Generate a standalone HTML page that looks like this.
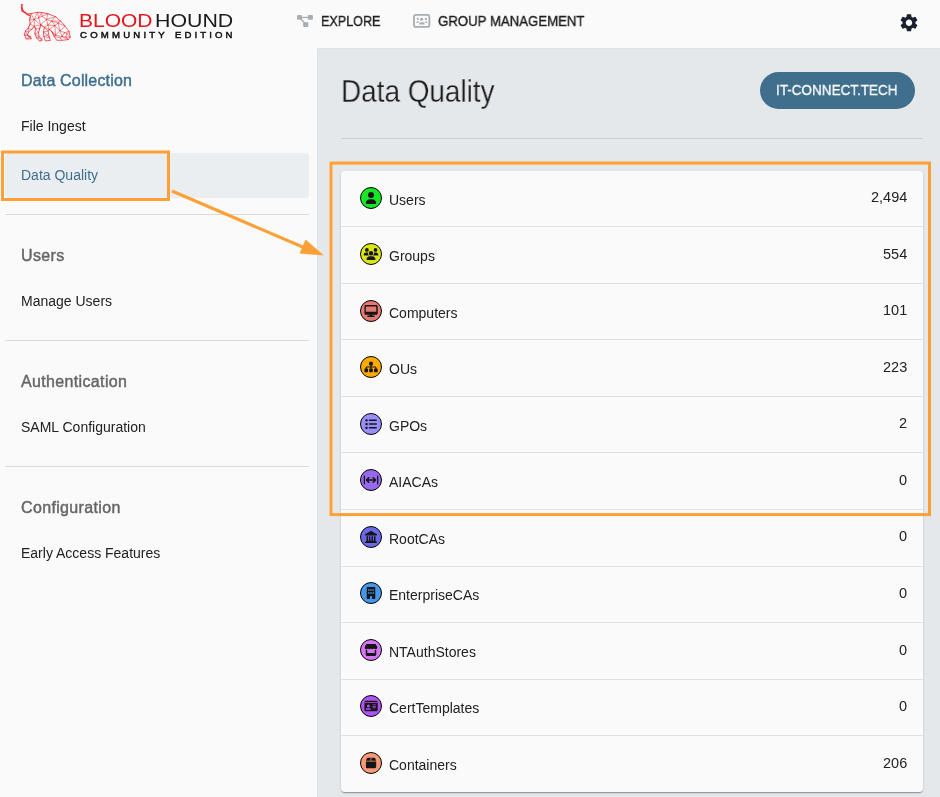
<!DOCTYPE html>
<html><head><meta charset="utf-8">
<style>
*{margin:0;padding:0;box-sizing:border-box}
html,body{width:940px;height:797px;overflow:hidden;background:#fafafa;font-family:"Liberation Sans",sans-serif;color:#212121}
body{position:relative}
.abs{position:absolute}
#header{position:absolute;left:0;top:0;width:940px;height:48px;background:#fafafa}
#side{position:absolute;left:0;top:48px;width:317px;height:749px;background:#fafafa}
#main{position:absolute;left:317px;top:48px;width:623px;height:749px;background:#e4e8eb;box-shadow:inset 1px 1px 0 rgba(0,0,0,0.018)}
.t{position:absolute;white-space:nowrap;line-height:1;color:#212121;will-change:transform}
.hd{color:#666;-webkit-text-stroke:0.45px currentColor;letter-spacing:0.35px}
.div{position:absolute;left:5px;width:304px;height:1px;background:#dadada}
#card{position:absolute;left:341px;top:171px;width:582px;height:621px;background:#fafafa;border-radius:4px;box-shadow:0 2px 1px -1px rgba(0,0,0,.2),0 1px 1px 0 rgba(0,0,0,.14),0 1px 3px 0 rgba(0,0,0,.12)}
.rl{position:absolute;left:0;right:0;height:1px;background:#e0e0e0}
.ic{position:absolute;left:19px;width:22px;height:22px;border-radius:50%;border:1px solid #000}
.ic svg{position:absolute;left:50%;top:50%;transform:translate(-50%,-50%)}
</style></head><body>
<div id="side"></div>
<div id="main"></div>
<div id="header">
<svg class="abs" style="left:0;top:0" width="80" height="48" viewBox="0 0 80 48"><path d="M21.7,4.4 L21.4,7.8 L22.0,11.0 L24.3,12.5 L27.5,14.7 L30.7,13.6 L37.5,12.3 L41.7,12.5 L47.9,13.8 L55.6,16.7 L60.7,21.1 L65.1,26.2 L69.0,31.4 L70.2,37.1 L68.3,39.6 L62.0,40.3 L56.8,40.3 L54.3,36.5 L51.7,31.4 L49.2,29.4 L48.0,31.0 L49.5,38.0 L50.5,40.3 L45.4,41.0 L43.8,36.3 L43.5,32.0 L44.4,27.3 L40.7,24.7 L39.6,28.9 L38.6,32.6 L39.1,36.8 L41.7,38.9 L42.2,40.5 L39.6,41.0 L36.5,37.8 L34.9,33.6 L35.4,28.4 L34.3,26.2 L31.7,29.4 L28.5,32.0 L27.5,35.2 L30.7,36.8 L31.2,38.9 L26.2,38.9 L24.3,34.7 L25.4,31.0 L28.0,28.4 L30.1,24.1 L29.6,20.0 L30.7,16.2 L27.5,14.7" fill="none" stroke="#e8262d" stroke-width="0.75" stroke-linejoin="round" stroke-linecap="round"/><path d=" M21.7,4.4 L22.0,11.0 M21.4,7.8 L24.3,12.5 M22.0,11.0 L27.5,14.7 M24.3,12.5 L30.7,16.2 M22.6,4.6 L22.4,8.2 M22.4,8.2 L23.2,10.6 M23.2,10.6 L25.3,12.2 M25.3,12.2 L28.4,14.0 M28.4,14.0 L30.7,13.6 M21.7,4.4 L22.6,4.6 M21.4,7.8 L22.4,8.2 M22.4,8.2 L22.0,11.0 M22.0,11.0 L23.2,10.6 M23.2,10.6 L24.3,12.5 M24.3,12.5 L25.3,12.2 M25.3,12.2 L27.5,14.7 M27.5,14.7 L28.4,14.0 M30.7,13.6 L29.6,20.0 M30.7,13.6 L34.3,19.4 M37.5,12.3 L34.3,19.4 M37.5,12.3 L38.6,17.8 M41.7,12.5 L38.6,17.8 M41.7,12.5 L42.2,16.2 M47.9,13.8 L42.2,16.2 M47.9,13.8 L46.5,19.4 M55.6,16.7 L46.5,19.4 M55.6,16.7 L51.7,21.1 M60.7,21.1 L51.7,21.1 M60.7,21.1 L58.1,23.1 M65.1,26.2 L58.1,23.1 M65.1,26.2 L60.0,30.7 M69.0,31.4 L64.5,32.6 M69.0,31.4 L67.0,33.9 M70.2,37.1 L67.0,33.9 M70.2,37.1 L65.8,37.1 M34.3,19.4 L38.6,17.8 M38.6,17.8 L42.2,16.2 M42.2,16.2 L46.5,19.4 M34.3,19.4 L40.7,24.7 M38.6,17.8 L40.7,24.7 M46.5,19.4 L40.7,24.7 M34.3,19.4 L30.1,24.1 M34.3,19.4 L34.3,26.2 M40.7,24.7 L34.3,26.2 M30.1,24.1 L34.3,26.2 M29.6,20.0 L34.3,19.4 M46.5,19.4 L51.7,21.1 M46.5,19.4 L47.9,25.0 M51.7,21.1 L47.9,25.0 M51.7,21.1 L58.1,23.1 M47.9,25.0 L54.9,25.6 M51.7,21.1 L54.9,25.6 M54.9,25.6 L58.1,23.1 M58.1,23.1 L60.0,30.7 M54.9,25.6 L60.0,30.7 M47.9,25.0 L49.2,29.4 M54.9,25.6 L49.2,29.4 M49.2,29.4 L55.6,35.2 M54.9,25.6 L55.6,35.2 M60.0,30.7 L55.6,35.2 M60.0,30.7 L64.5,32.6 M64.5,32.6 L67.0,33.9 M64.5,32.6 L62.0,36.5 M55.6,35.2 L62.0,36.5 M62.0,36.5 L65.8,37.1 M65.8,37.1 L67.0,33.9 M60.0,30.7 L62.0,36.5 M55.6,35.2 L54.3,36.5 M62.0,36.5 L60.5,38.0 M60.5,38.0 L54.3,36.5 M60.5,38.0 L62.0,40.3 M65.8,37.1 L68.3,39.6 M62.0,36.5 L68.3,39.6 M40.7,24.7 L44.4,27.3 M47.9,25.0 L44.4,27.3 M44.4,27.3 L48.0,31.0 M48.0,31.0 L43.5,32.0 M43.5,32.0 L47.5,35.0 M47.5,35.0 L49.5,38.0 M47.5,35.0 L43.8,36.3 M43.8,36.3 L49.5,38.0 M49.2,29.4 L44.4,27.3 M40.7,24.7 L39.6,28.9 M34.3,26.2 L35.4,28.4 M35.4,28.4 L39.6,28.9 M35.4,28.4 L38.6,32.6 M38.6,32.6 L34.9,33.6 M34.9,33.6 L39.1,36.8 M39.1,36.8 L36.5,37.8 M36.5,37.8 L41.7,38.9 M41.7,38.9 L39.6,41.0 M30.1,24.1 L28.0,28.4 M34.3,26.2 L31.7,29.4 M28.0,28.4 L31.7,29.4 M28.0,28.4 L28.5,32.0 M28.5,32.0 L25.4,31.0 M25.4,31.0 L27.5,35.2 M27.5,35.2 L24.3,34.7 M24.3,34.7 L30.7,36.8 M30.7,36.8 L26.2,38.9 M27.5,35.2 L31.2,38.9 M51.7,31.4 L54.3,36.5 M55.6,35.2 L51.7,31.4" fill="none" stroke="#e8262d" stroke-width="0.5" stroke-linecap="round"/></svg>
<div class="t" style="left:79.2px;top:13.1px;font-size:17.8px;color:#e3161d;transform:scaleX(1.18);transform-origin:0 0">BLOOD</div>
<div class="t" style="left:155px;top:13.1px;font-size:17.8px;color:#1a1a1a;transform:scaleX(1.2);transform-origin:0 0">HOUND</div>
<div class="t" style="left:79.6px;top:29.7px;font-size:9.6px;-webkit-text-stroke:0.5px currentColor;letter-spacing:3.2px;color:#111">COMMUNITY</div>
<div class="t" style="left:175.4px;top:29.7px;font-size:9.6px;-webkit-text-stroke:0.5px currentColor;letter-spacing:3.1px;color:#111">EDITION</div>
<svg class="abs" style="left:290px;top:8px" width="30" height="26" viewBox="290 8 30 26">
<g fill="#a7adb1">
<rect x="297" y="15" width="5" height="4.8" rx="1"/><rect x="307.9" y="15" width="5" height="4.8" rx="1"/><rect x="303.2" y="22.2" width="5.1" height="4.8" rx="1"/>
<rect x="301" y="16.8" width="8" height="1.3"/>
</g>
<line x1="300.5" y1="18.5" x2="305" y2="23.5" stroke="#a7adb1" stroke-width="1.4"/>
</svg>
<div class="t" style="left:320.9px;top:12.9px;font-size:15px;-webkit-text-stroke:0.4px currentColor;color:#1f1f1f;transform:scaleX(0.84);transform-origin:0 0">EXPLORE</div>
<svg class="abs" style="left:405px;top:8px" width="30" height="26" viewBox="405 8 30 26">
<rect x="414" y="14.9" width="15.4" height="12" rx="2" fill="none" stroke="#a7adb1" stroke-width="1.8"/>
<g fill="#a7adb1">
<circle cx="417.8" cy="18.9" r="1.1"/><circle cx="421.6" cy="19.3" r="1.5"/><circle cx="425.9" cy="18.9" r="1.1"/>
<path d="M419 24.4 C419 22.8 420 22.2 421.9 22.2 C423.8 22.2 424.8 22.8 424.8 24.4Z"/>
<path d="M416 22.8 C416.2 21.8 417 21.2 418.8 21.2 L418.6 22.8Z"/>
<path d="M425.2 22.8 L425 21.2 C426.8 21.2 427.6 21.8 427.8 22.8Z"/>
</g>
</svg>
<div class="t" style="left:438.4px;top:12.9px;font-size:15px;-webkit-text-stroke:0.4px currentColor;color:#1f1f1f;transform:scaleX(0.88);transform-origin:0 0">GROUP MANAGEMENT</div>
<svg class="abs" style="left:898px;top:11.8px" width="22" height="21.5" viewBox="0 0 24 24"><path fill="#1b202c" d="M19.14 12.94c.04-.3.06-.61.06-.94 0-.32-.02-.64-.07-.94l2.03-1.58c.18-.14.23-.41.12-.61l-1.92-3.32c-.12-.22-.37-.29-.59-.22l-2.39.96c-.5-.38-1.03-.7-1.62-.94l-.36-2.54c-.04-.24-.24-.41-.48-.41h-3.84c-.24 0-.43.17-.47.41l-.36 2.54c-.59.24-1.13.57-1.62.94l-2.39-.96c-.22-.08-.47 0-.59.22L2.74 8.87c-.12.21-.08.47.12.61l2.03 1.58c-.05.3-.09.63-.09.94s.02.64.07.94l-2.03 1.58c-.18.14-.23.41-.12.61l1.92 3.32c.12.22.37.29.59.22l2.39-.96c.5.38 1.030.7 1.62.94l.36 2.54c.05.24.24.41.48.41h3.84c.24 0 .44-.17.47-.41l.36-2.54c.59-.24 1.13-.56 1.62-.94l2.39.96c.22.08.47 0 .59-.22l1.92-3.32c.12-.22.07-.47-.12-.61l-2.01-1.58zM12 15.6c-1.98 0-3.6-1.62-3.6-3.6s1.62-3.6 3.6-3.6 3.6 1.62 3.6 3.6-1.62 3.6-3.6 3.6z"/></svg>
</div>
<div class="t hd" style="left:21.00px;top:73.36px;font-size:16px;color:#406f8e;letter-spacing:0.17px">Data Collection</div>
<div class="t it" style="left:21.00px;top:118.75px;font-size:14px;">File Ingest</div>
<div class="abs" style="left:5px;top:153px;width:304px;height:44.5px;background:#eaeef1;border-radius:4px"></div>
<div class="t it" style="left:21.00px;top:167.85px;font-size:14px;color:#406f8e">Data Quality</div>
<div class="div" style="top:214px"></div>
<div class="t hd" style="left:21.00px;top:248.06px;font-size:16px;">Users</div>
<div class="t it" style="left:21.00px;top:293.65px;font-size:14px;">Manage Users</div>
<div class="div" style="top:340px"></div>
<div class="t hd" style="left:21.00px;top:374.06px;font-size:16px;">Authentication</div>
<div class="t it" style="left:21.00px;top:419.65px;font-size:14px;">SAML Configuration</div>
<div class="div" style="top:466px"></div>
<div class="t hd" style="left:21.00px;top:500.06px;font-size:16px;">Configuration</div>
<div class="t it" style="left:21.00px;top:545.65px;font-size:14px;">Early Access Features</div>
<div class="t " style="left:340.60px;top:76.18px;font-size:30.5px;color:#1c1c1c;-webkit-text-stroke:0.3px #e4e8eb;transform:scaleX(0.915);transform-origin:0 0">Data Quality</div>
<div class="abs" style="left:760px;top:72px;width:155px;height:37px;border-radius:18.5px;background:#406f8e"></div>
<div class="t " style="left:775.80px;top:81.80px;font-size:15px;color:#fff;-webkit-text-stroke:0.3px #fff;transform:scaleX(0.9);transform-origin:0 0">IT-CONNECT.TECH</div>
<div class="abs" style="left:341px;top:138px;width:582px;height:1px;background:#c9cdd0"></div>
<div id="card">
<div class="ic" style="top:16.00px;background:#17e625"><svg width="10.50" height="12" viewBox="0 0 448 512"><path fill="#161616" d="M224 256A128 128 0 1 0 224 0a128 128 0 1 0 0 256zm-45.7 48C79.8 304 0 383.8 0 482.3C0 498.7 13.3 512 29.7 512H418.3c16.4 0 29.7-13.3 29.7-29.7C448 383.8 368.2 304 269.7 304H178.3z"/></svg></div>
<div class="t " style="left:47.60px;top:21.75px;font-size:14px;">Users</div>
<div class="t" style="right:16px;top:19.13px;font-size:14.5px">2,494</div>
<div class="rl" style="top:55.20px"></div>
<div class="ic" style="top:72.45px;background:#dbe617"><svg width="15.00" height="12" viewBox="0 0 640 512"><path fill="#161616" d="M144 0a80 80 0 1 1 0 160A80 80 0 1 1 144 0zM512 0a80 80 0 1 1 0 160A80 80 0 1 1 512 0zM0 298.7C0 239.8 47.8 192 106.7 192h42.7c15.9 0 31 3.5 44.6 9.7c-1.3 7.2-1.9 14.7-1.9 22.3c0 38.2 16.8 72.5 43.300 96c-.2 0-.4 0-.7 0H21.3C9.6 320 0 310.4 0 298.7zM405.3 320c-.2 0-.4 0-.7 0c26.6-23.5 43.3-57.8 43.3-96c0-7.6-.7-15-1.9-22.3c13.6-6.3 28.7-9.7 44.6-9.7h42.7C592.2 192 640 239.8 640 298.7c0 11.8-9.6 21.3-21.3 21.3H405.3zM224 224a96 96 0 1 1 192 0 96 96 0 1 1 -192 0zM128 485.3C128 411.7 187.7 352 261.3 352H378.7C452.3 352 512 411.7 512 485.3c0 14.7-11.9 26.7-26.7 26.7H154.7c-14.7 0-26.7-11.9-26.7-26.700z"/></svg></div>
<div class="t " style="left:47.60px;top:78.25px;font-size:14px;">Groups</div>
<div class="t" style="right:16px;top:75.68px;font-size:14.5px">554</div>
<div class="rl" style="top:111.76px"></div>
<div class="ic" style="top:128.90px;background:#e67873"><svg width="13.50" height="12" viewBox="0 0 576 512"><path fill="#161616" d="M64 0C28.7 0 0 28.7 0 64V352c0 35.300 28.7 64 64 64H240l-10.7 32H160c-17.7 0-32 14.3-32 32s14.3 32 32 32H416c17.7 0 32-14.3 32-32s-14.3-32-32-32H346.7L336 416H512c35.3 0 64-28.7 64-64V64c0-35.3-28.7-64-64-64H64zM512 64V288H64V64H512z"/></svg></div>
<div class="t " style="left:47.60px;top:134.75px;font-size:14px;">Computers</div>
<div class="t" style="right:16px;top:132.24px;font-size:14.5px">101</div>
<div class="rl" style="top:168.31px"></div>
<div class="ic" style="top:185.35px;background:#ffaa00"><svg width="13.50" height="12" viewBox="0 0 576 512"><path fill="#161616" d="M208 80c0-26.5 21.5-48 48-48h64c26.5 0 48 21.5 48 48v64c0 26.5-21.5 48-48 48h-8v40H464c30.9 0 56 25.1 56 56v32h8c26.5 0 48 21.5 48 48v64c0 26.5-21.5 48-48 48H464c-26.5 0-48-21.5-48-48V368c0-26.5 21.5-48 48-48h8V288c0-4.4-3.6-8-8-8H312v40h8c26.5 0 48 21.5 48 48v64c0 26.5-21.5 48-48 48H256c-26.5 0-48-21.5-48-48V368c0-26.5 21.5-48 48-48h8V280H112c-4.4 0-8 3.6-8 8v32h8c26.5 0 48 21.5 48 48v64c0 26.5-21.5 48-48 48H48c-26.5 0-48-21.5-48-48V368c0-26.5 21.5-48 48-48h8V288c0-30.9 25.1-56 56-56H264V192h-8c-26.5 0-48-21.5-48-48V80z"/></svg></div>
<div class="t " style="left:47.60px;top:191.25px;font-size:14px;">OUs</div>
<div class="t" style="right:16px;top:188.79px;font-size:14.5px">223</div>
<div class="rl" style="top:224.87px"></div>
<div class="ic" style="top:241.80px;background:#998efd"><svg width="12.00" height="12" viewBox="0 0 512 512"><path fill="#161616" d="M40 48C26.7 48 16 58.7 16 72v48c0 13.3 10.7 24 24 24H88c13.3 0 24-10.7 24-24V72c0-13.3-10.7-24-24-24H40zM192 64c-17.7 0-32 14.3-32 32s14.3 32 32 32H480c17.7 0 32-14.3 32-32s-14.3-32-32-32H192zm0 160c-17.7 0-32 14.3-32 32s14.3 32 32 32H480c17.7 0 32-14.3 32-32s-14.3-32-32-32H192zm0 160c-17.7 0-32 14.3-32 32s14.3 32 32 32H480c17.7 0 32-14.3 32-32s-14.3-32-32-32H192zM16 232v48c0 13.3 10.7 24 24 24H88c13.3 0 24-10.7 24-24V232c0-13.3-10.7-24-24-24H40c-13.3 0-24 10.7-24 24zM40 368c-13.3 0-24 10.7-24 24v48c0 13.3 10.7 24 24 24H88c13.3 0 24-10.7 24-24V392c0-13.3-10.7-24-24-24H40z"/></svg></div>
<div class="t " style="left:47.60px;top:247.75px;font-size:14px;">GPOs</div>
<div class="t" style="right:16px;top:245.35px;font-size:14.5px">2</div>
<div class="rl" style="top:281.42px"></div>
<div class="ic" style="top:298.25px;background:#9769f0"><svg width="15.00" height="12" viewBox="0 0 640 512"><path fill="#161616" d="M32 64c17.7 0 32 14.3 32 32l0 320c0 17.7-14.3 32-32 32s-32-14.3-32-32V96C0 78.3 14.3 64 32 64zm214.6 73.4c12.5 12.5 12.5 32.8 0 45.3L205.3 224l229.5 0-41.4-41.4c-12.5-12.5-12.5-32.8 0-45.3s32.8-12.5 45.3 0l96 96c12.5 12.5 12.5 32.8 0 45.3l-96 96c-12.5 12.5-32.8 12.5-45.3 0s-12.5-32.8 0-45.3L434.7 288l-229.5 0 41.4 41.4c12.5 12.5 12.5 32.8 0 45.3s-32.8 12.5-45.3 0l-96-96c-12.5-12.5-12.5-32.8 0-45.3l96-96c12.5-12.5 32.8-12.5 45.3 0zM640 96V416c0 17.7-14.3 32-32 32s-32-14.3-32-32V96c0-17.7 14.3-32 32-32s32 14.3 32 32z"/></svg></div>
<div class="t " style="left:47.60px;top:304.25px;font-size:14px;">AIACAs</div>
<div class="t" style="right:16px;top:301.91px;font-size:14.5px">0</div>
<div class="rl" style="top:337.98px"></div>
<div class="ic" style="top:354.70px;background:#6968e8"><svg width="12.00" height="12" viewBox="0 0 512 512"><path fill="#161616" d="M240.1 4.2c9.8-5.6 21.9-5.6 31.8 0l171.8 98.1L448 104l0 .9 47.9 27.4c12.6 7.2 18.8 22 15.1 36s-16.4 23.8-30.9 23.8H32c-14.5 0-27.2-9.8-30.9-23.8s2.5-28.8 15.1-36L64 104.9V104l4.4-1.6L240.1 4.2zM64 224h64V416h40V224h64V416h48V224h64V416h40V224h64V420.3c.6 .3 1.2 .7 1.8 1.1l48 32c11.7 7.8 17 22.4 12.9 35.9S494.1 512 480 512H32c-14.1 0-26.5-9.2-30.6-22.7s1.100-28.1 12.9-35.9l48-32c.6-.4 1.2-.7 1.8-1.1V224z"/></svg></div>
<div class="t " style="left:47.60px;top:360.75px;font-size:14px;">RootCAs</div>
<div class="t" style="right:16px;top:358.46px;font-size:14.5px">0</div>
<div class="rl" style="top:394.54px"></div>
<div class="ic" style="top:411.15px;background:#4696e9"><svg width="9.00" height="12" viewBox="0 0 384 512"><path fill="#161616" d="M48 0C21.5 0 0 21.5 0 48V464c0 26.5 21.5 48 48 48h96V432c0-26.5 21.5-48 48-48s48 21.5 48 48v80h96c26.5 0 48-21.5 48-48V48c0-26.5-21.5-48-48-48H48zM64 240c0-8.8 7.2-16 16-16h32c8.8 0 16 7.2 16 16v32c0 8.8-7.2 16-16 16H80c-8.8 0-16-7.2-16-16V240zm112-16h32c8.8 0 16 7.2 16 16v32c0 8.8-7.2 16-16 16H176c-8.8 0-16-7.2-16-16V240c0-8.8 7.2-16 16-16zm80 16c0-8.8 7.2-16 16-16h32c8.8 0 16 7.2 16 16v32c0 8.8-7.2 16-16 16H272c-8.8 0-16-7.2-16-16V240zM80 96h32c8.8 0 16 7.2 16 16v32c0 8.8-7.2 16-16 16H80c-8.8 0-16-7.2-16-16V112c0-8.8 7.2-16 16-16zm80 16c0-8.8 7.2-16 16-16h32c8.8 0 16 7.2 16 16v32c0 8.8-7.2 16-16 16H176c-8.8 0-16-7.2-16-16V112zM272 96h32c8.8 0 16 7.2 16 16v32c0 8.8-7.2 16-16 16H272c-8.8 0-16-7.2-16-16V112c0-8.8 7.2-16 16-16z"/></svg></div>
<div class="t " style="left:47.60px;top:417.25px;font-size:14px;">EnterpriseCAs</div>
<div class="t" style="right:16px;top:415.02px;font-size:14.5px">0</div>
<div class="rl" style="top:451.09px"></div>
<div class="ic" style="top:467.60px;background:#d575f5"><svg width="13.50" height="12" viewBox="0 0 576 512"><path fill="#161616" d="M547.6 103.8L490.3 13.1C485.2 5 476.1 0 466.4 0H109.6C99.9 0 90.8 5 85.7 13.1L28.3 103.8c-29.6 46.8-3.4 111.9 51.9 119.4c4 .5 8.1 .8 12.1 .8c26.1 0 49.3-11.4 65.2-29c15.9 17.6 39.1 29 65.2 29c26.1 0 49.3-11.4 65.2-29c15.9 17.6 39.1 29 65.2 29c26.2 0 49.3-11.4 65.2-29c16 17.6 39.1 29 65.2 29c4.1 0 8.1-.3 12.1-.8c55.5-7.4 81.8-72.5 52.1-119.4zM499.7 254.9l-.1 0c-5.3 .7-10.7 1.1-16.2 1.1c-12.4 0-24.3-1.9-35.4-5.3V384H128V250.6c-11.2 3.5-23.2 5.4-35.6 5.4c-5.5 0-11-.4-16.3-1.1l-.1 0c-4.1-.6-8.1-1.3-12-2.3V384v64c0 35.3 28.7 64 64 64H448c35.3 0 64-28.7 64-64V384 252.6c-4 1-8 1.8-12.3 2.300z"/></svg></div>
<div class="t " style="left:47.60px;top:473.75px;font-size:14px;">NTAuthStores</div>
<div class="t" style="right:16px;top:471.57px;font-size:14.5px">0</div>
<div class="rl" style="top:507.65px"></div>
<div class="ic" style="top:524.05px;background:#b153f3"><svg width="13.50" height="12" viewBox="0 0 576 512"><path fill="#161616" d="M0 96l576 0c0-35.3-28.7-64-64-64H64C28.7 32 0 60.7 0 96zm0 32V416c0 35.3 28.7 64 64 64H512c35.3 0 64-28.7 64-64V128H0zM64 405.3c0-29.5 23.9-53.3 53.3-53.3H234.7c29.5 0 53.3 23.9 53.3 53.3c0 5.9-4.8 10.7-10.7 10.7H74.7c-5.9 0-10.7-4.8-10.7-10.7zM176 192a64 64 0 1 1 0 128 64 64 0 1 1 0-128zm176 16c0-8.8 7.2-16 16-16H480c8.8 0 16 7.2 16 16s-7.2 16-16 16H368c-8.8 0-16-7.2-16-16zm0 64c0-8.8 7.2-16 16-16H480c8.8 0 16 7.2 16 16s-7.2 16-16 16H368c-8.8 0-16-7.2-16-16zm0 64c0-8.8 7.2-16 16-16H480c8.8 0 16 7.2 16 16s-7.2 16-16 16H368c-8.8 0-16-7.2-16-16z"/></svg></div>
<div class="t " style="left:47.60px;top:530.25px;font-size:14px;">CertTemplates</div>
<div class="t" style="right:16px;top:528.13px;font-size:14.5px">0</div>
<div class="rl" style="top:564.20px"></div>
<div class="ic" style="top:580.50px;background:#f79a78"><svg width="10.50" height="12" viewBox="0 0 448 512"><path fill="#161616" d="M50.7 58.5L0 160H208V32H93.7C75.5 32 58.9 42.3 50.7 58.5zM240 160H448L397.3 58.5C389.1 42.3 372.5 32 354.3 32H240V160zm208 32H0V416c0 35.3 28.7 64 64 64H384c35.3 0 64-28.7 64-64V192z"/></svg></div>
<div class="t " style="left:47.60px;top:586.75px;font-size:14px;">Containers</div>
<div class="t" style="right:16px;top:584.69px;font-size:14.5px">206</div>
</div>
<svg class="abs" style="left:0;top:0" width="940" height="797">
<rect x="2.5" y="152" width="166" height="47.5" fill="none" stroke="#ffa036" stroke-width="3"/>
<rect x="331" y="163.1" width="598.5" height="351.5" fill="none" stroke="#ffa036" stroke-width="3"/>
<line x1="172" y1="191" x2="305" y2="248" stroke="#ffa036" stroke-width="3"/>
<polygon points="324,255.5 299.5,253.5 305.5,239.5" fill="#ffa036"/>
</svg>
</body></html>
